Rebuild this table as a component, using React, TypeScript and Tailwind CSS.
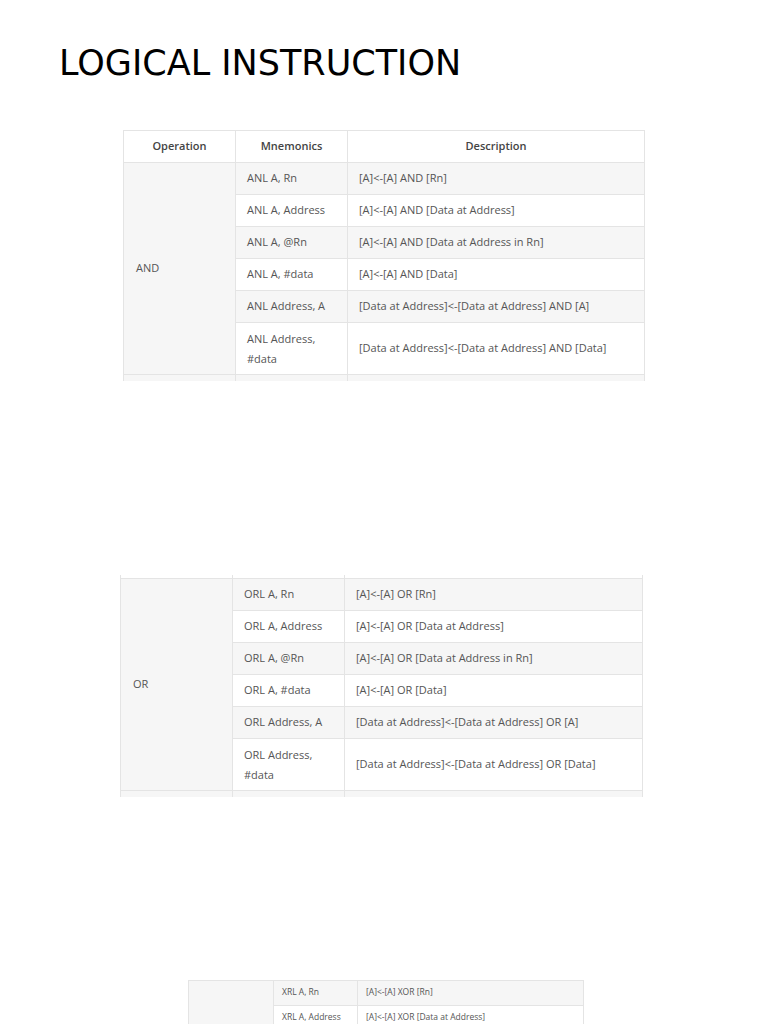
const andRows = [
  ["ANL A, Rn", "[A]<-[A] AND [Rn]"],
  ["ANL A, Address", "[A]<-[A] AND [Data at Address]"],
  ["ANL A, @Rn", "[A]<-[A] AND [Data at Address in Rn]"],
  ["ANL A, #data", "[A]<-[A] AND [Data]"],
  ["ANL Address, A", "[Data at Address]<-[Data at Address] AND [A]"],
];

const orRows = [
  ["ORL A, Rn", "[A]<-[A] OR [Rn]"],
  ["ORL A, Address", "[A]<-[A] OR [Data at Address]"],
  ["ORL A, @Rn", "[A]<-[A] OR [Data at Address in Rn]"],
  ["ORL A, #data", "[A]<-[A] OR [Data]"],
  ["ORL Address, A", "[Data at Address]<-[Data at Address] OR [A]"],
];

const cell = "border border-[#e4e4e4] px-[11px] align-middle p-0";

function OpTable({
  op,
  prefix,
  rows,
  last,
  header,
}: {
  op: string;
  prefix: string;
  rows: string[][];
  last: string;
  header: boolean;
}) {
  return (
    <table className="w-full table-fixed border-collapse text-[11px] text-[#555]" style={{ fontFamily: '"Open Sans", sans-serif' }}>
      <colgroup>
        <col className="w-[112px]" />
        <col className="w-[112px]" />
        <col />
      </colgroup>
      <tbody>
        {header ? (
          <tr className="h-[32px] bg-white font-semibold text-[#444]">
            <td className={`${cell} text-center`}>Operation</td>
            <td className={`${cell} text-center`}>Mnemonics</td>
            <td className={`${cell} text-center`}>Description</td>
          </tr>
        ) : (
          <tr className="h-[4px] bg-white">
            <td className="border-x border-[#e4e4e4] p-0"></td>
            <td className="border-x border-[#e4e4e4] p-0"></td>
            <td className="border-x border-[#e4e4e4] p-0"></td>
          </tr>
        )}
        {rows.map((r, i) => (
          <tr key={r[0]} className={`h-[32px] ${i % 2 === 0 ? "bg-[#f6f6f6]" : "bg-white"}`}>
            {i === 0 && (
              <td rowSpan={6} className={`${cell} bg-[#f6f6f6]`}>
                <span className="pl-[1px]">{op}</span>
              </td>
            )}
            <td className={cell}>{r[0]}</td>
            <td className={cell}>{r[1]}</td>
          </tr>
        ))}
        <tr className="h-[52px] bg-white">
          <td className={`${cell} leading-[20px]`}>
            {prefix} Address,
            <br />
            #data
          </td>
          <td className={cell}>{last}</td>
        </tr>
        <tr className="h-[6px] bg-[#f6f6f6]">
          <td className="border-x border-t border-[#e4e4e4] p-0"></td>
          <td className="border-x border-t border-[#e4e4e4] p-0"></td>
          <td className="border-x border-t border-[#e4e4e4] p-0"></td>
        </tr>
      </tbody>
    </table>
  );
}

export default function App() {
  return (
    <div className="w-[768px] h-[1024px] overflow-hidden bg-white">
      <h1
        className="pl-[59px] pt-[46px] text-[35px] leading-[35px] text-black"
        style={{ fontFamily: '"DejaVu Sans", sans-serif' }}
      >
        LOGICAL INSTRUCTION
      </h1>

      <div className="ml-[123px] mt-[49px] w-[522px]">
        <OpTable op="AND" prefix="ANL" rows={andRows} last="[Data at Address]<-[Data at Address] AND [Data]" header />
      </div>

      <div className="ml-[120px] mt-[194px] w-[523px]">
        <OpTable op="OR" prefix="ORL" rows={orRows} last="[Data at Address]<-[Data at Address] OR [Data]" header={false} />
      </div>

      <div className="ml-[188px] mt-[183px] w-[396px]">
        <table className="w-full table-fixed border-collapse text-[8.5px] text-[#555]" style={{ fontFamily: '"Open Sans", sans-serif' }}>
          <colgroup>
            <col className="w-[85px]" />
            <col className="w-[84px]" />
            <col />
          </colgroup>
          <tbody>
            <tr className="h-[25px] bg-[#f6f6f6]">
              <td rowSpan={2} className="border border-[#e4e4e4] bg-[#f6f6f6] p-0"></td>
              <td className="border border-[#e4e4e4] px-[8px] p-0">XRL A, Rn</td>
              <td className="border border-[#e4e4e4] px-[8px] p-0">[A]&lt;-[A] XOR [Rn]</td>
            </tr>
            <tr className="h-[25px] bg-white">
              <td className="border border-[#e4e4e4] px-[8px] p-0">XRL A, Address</td>
              <td className="border border-[#e4e4e4] px-[8px] p-0">[A]&lt;-[A] XOR [Data at Address]</td>
            </tr>
          </tbody>
        </table>
      </div>
    </div>
  );
}
